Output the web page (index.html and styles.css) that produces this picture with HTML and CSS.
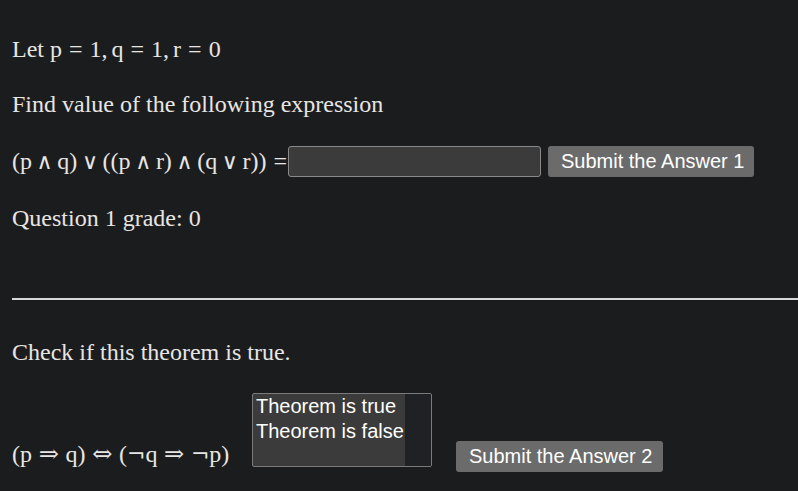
FILE: index.html
```html
<!DOCTYPE html>
<html>
<head>
<meta charset="utf-8">
<link rel="stylesheet" href="styles.css">
</head>
<body>
<p class="line first">Let <span class="math">p<span class="rel">=</span>1<span class="pun">,</span>q<span class="rel">=</span>1<span class="pun">,</span>r<span class="rel">=</span>0</span></p>
<p class="line second">Find value of the following expression</p>
<div class="row q1">
  <span class="math expr">(p<span class="bin op">∧</span>q)<span class="bin op">∨</span>((p<span class="bin op">∧</span>r)<span class="bin op">∧</span>(q<span class="bin op">∨</span>r))<span class="rel last">=</span></span>
  <input class="answer" type="text">
  <button class="btn btn1">Submit the Answer 1</button>
</div>
<p class="line grade">Question 1 grade: 0</p>
<hr class="sep">
<p class="line check">Check if this theorem is true.</p>
<div class="row q2">
  <span class="math expr2">(p<span class="rel arr">⇒</span>q)<span class="rel arr">⇔</span>(<span class="neg">¬</span>q<span class="rel arr">⇒</span><span class="neg">¬</span>p)</span>
  <div class="listbox" role="listbox">
    <div class="options">
      <div class="opt" role="option">Theorem is true</div>
      <div class="opt" role="option">Theorem is false</div>
    </div>
    <div class="track"></div>
  </div>
  <button class="btn btn2">Submit the Answer 2</button>
</div>
</body>
</html>
```

FILE: styles.css
```css
html, body {
  margin: 0;
  padding: 0;
  background: #1b1c1e;
}
body {
  padding: 35px 12px 0 12px;
  color: #e8e6e3;
  font-family: "Liberation Serif", "DejaVu Serif", serif;
  font-size: 24px;
  line-height: 28px;
  overflow: hidden;
}
.line {
  margin: 0;
}
.second { margin-top: 27px; }
.row {
  display: flex;
}
.q1 {
  margin-top: 28px;
  align-items: center;
}
.math {
  white-space: nowrap;
}
.rel {
  margin: 0 7px;
}
.rel.last {
  margin-right: 1px;
}
.bin {
  margin: 0 4.6px;
}
.pun {
  margin-right: 4px;
}
.op {
  font-family: "DejaVu Serif", serif;
  font-size: 22px;
}
.arr {
  font-family: "DejaVu Serif", serif;
  font-size: 24px;
  margin: 0 6.7px;
}
.neg {
  font-family: "DejaVu Serif", serif;
  font-size: 22px;
}
.expr {
  flex: none;
  width: 276px;
}
.answer {
  box-sizing: border-box;
  width: 253px;
  height: 31px;
  margin: 0;
  flex: none;
  background: #3b3b3b;
  border: 1px solid #8a8a8a;
  border-radius: 3px;
  color: #fff;
}
.btn {
  box-sizing: border-box;
  height: 31px;
  margin: 0;
  padding: 0 0 0 13px;
  flex: none;
  text-align: left;
  white-space: nowrap;
  background: #6b6b6b;
  color: #ffffff;
  border: none;
  border-radius: 3px;
  font-family: "Liberation Sans", Arial, sans-serif;
  font-size: 20px;
  line-height: 31px;
}
.btn1 {
  margin-left: 7px;
  width: 206px;
}
.grade { margin-top: 27px; }
.sep {
  margin: 66px -12px 0 0;
  height: 0;
  border: none;
  border-top: 2px solid #d8d8d8;
}
.check { margin-top: 38px; }
.q2 {
  margin-top: 27px;
  align-items: flex-end;
}
.expr2 {
  flex: none;
  width: 217px;
  margin-bottom: 3px;
}
.listbox {
  box-sizing: border-box;
  width: 180px;
  height: 74px;
  margin-left: 23px;
  margin-bottom: 5px;
  flex: none;
  display: flex;
  border: 1px solid #7a7a7a;
  border-radius: 2px;
  background: #3b3b3b;
  overflow: hidden;
}
.options {
  flex: 1;
  padding: 0 0 0 3px;
  font-family: "Liberation Sans", Arial, sans-serif;
  font-size: 20px;
  line-height: 25px;
  color: #ffffff;
}
.opt {
  white-space: nowrap;
}
.track {
  width: 26px;
  background: #202124;
}
.btn2 {
  margin-left: 24px;
  width: 207px;
}
```
